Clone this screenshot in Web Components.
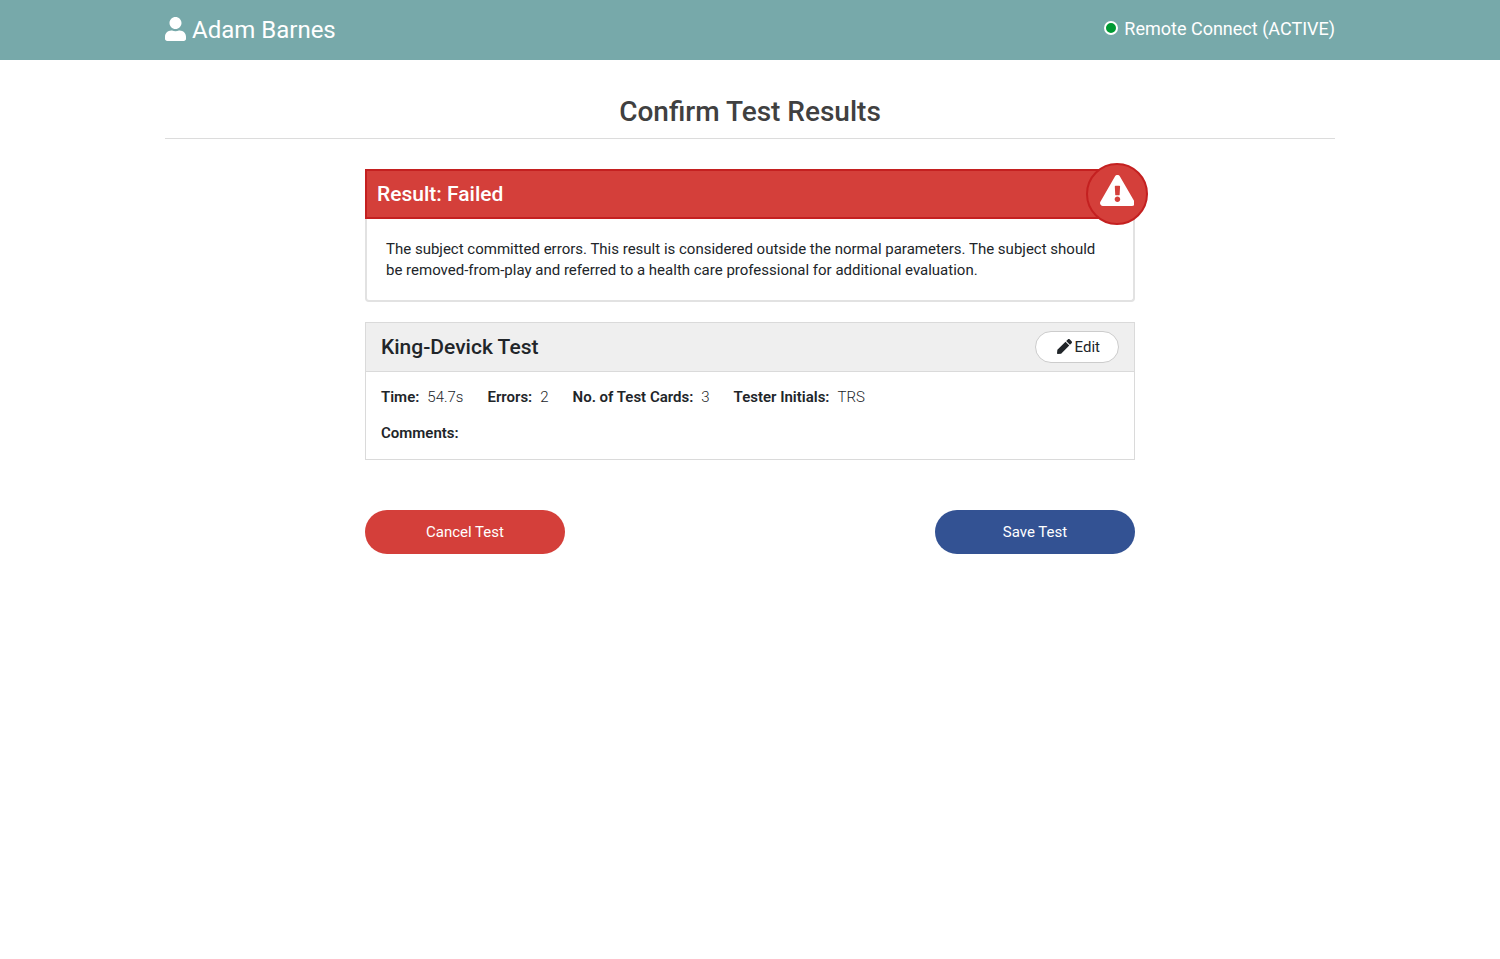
<!DOCTYPE html>
<html lang="en">
<head>
<meta charset="utf-8">
<meta name="viewport" content="width=device-width, initial-scale=1">
<title>Confirm Test Results</title>
<style>
  body {
    margin: 0;
    font-family: Roboto, "Liberation Sans", sans-serif;
    font-size: 15px;
    line-height: 21px;
    color: #212529;
    background: #fff;
  }
</style>
</head>
<body>
<kd-header name="Adam Barnes" status="ACTIVE"></kd-header>

<kd-page heading="Confirm Test Results">
  <kd-result heading="Result: Failed">The subject committed errors. This result is considered outside the normal parameters. The subject should be removed-from-play and referred to a health care professional for additional evaluation.</kd-result>

  <kd-test-card heading="King-Devick Test">
    <kd-field label="Time:">54.7s</kd-field>
    <kd-field label="Errors:">2</kd-field>
    <kd-field label="No. of Test Cards:">3</kd-field>
    <kd-field label="Tester Initials:">TRS</kd-field>
    <kd-field label="Comments:" slot="comments"></kd-field>
  </kd-test-card>

  <kd-button variant="danger" slot="actions">Cancel Test</kd-button>
  <kd-button variant="primary" slot="actions">Save Test</kd-button>
</kd-page>

<script>
const ICONS = {
  user: {
    box: '0 0 448 512',
    d: 'M224 256c70.7 0 128-57.3 128-128S294.7 0 224 0 96 57.3 96 128s57.3 128 128 128zm89.6 32h-16.7c-22.2 10.2-46.9 16-72.9 16s-50.6-5.8-72.9-16h-16.7C60.2 288 0 348.2 0 422.4V464c0 26.5 21.5 48 48 48h352c26.5 0 48-21.5 48-48v-41.6c0-74.2-60.2-134.4-134.4-134.4z'
  },
  warning: {
    box: '0 0 576 512',
    d: 'M569.517 440.013C587.975 472.007 564.806 512 527.94 512H48.054c-36.937 0-59.999-40.055-41.577-71.987L246.423 23.985c18.467-32.009 64.72-31.951 83.154 0l239.94 416.028zM288 354c-25.405 0-46 20.595-46 46s20.595 46 46 46 46-20.595 46-46-20.595-46-46-46zm-43.673-165.346l7.418 136c.347 6.364 5.609 11.346 11.982 11.346h48.546c6.373 0 11.635-4.982 11.982-11.346l7.418-136c.375-6.874-5.098-12.654-11.982-12.654h-63.383c-6.884 0-12.356 5.78-11.981 12.654z'
  },
  pen: {
    box: '0 0 512 512',
    d: 'M290.74 93.24l128.02 128.02-277.99 277.99-114.14 12.6C11.35 513.54-1.56 500.62.14 485.34l12.7-114.22 277.9-277.88zm207.2-19.06l-60.11-60.11c-18.75-18.75-49.16-18.75-67.91 0l-56.55 56.55 128.02 128.02 56.55-56.55c18.75-18.76 18.75-49.16 0-67.91z'
  }
};

class KdElement extends HTMLElement {
  constructor() {
    super();
    this.attachShadow({ mode: 'open' });
  }

  connectedCallback() {
    this.shadowRoot.innerHTML = this.render();
  }

  attr(name) {
    return this.getAttribute(name) || '';
  }
}

// <kd-icon name="user">, sized by its height
class KdIcon extends KdElement {
  render() {
    const icon = ICONS[this.attr('name')];
    return /* html */ `
      <style>
        :host { display: inline-flex; height: 1em; padding-bottom: 2px; }
        svg { display: block; height: 100%; fill: currentColor; }
      </style>
      <svg viewBox="${icon.box}" aria-hidden="true"><path d="${icon.d}"/></svg>
    `;
  }
}

class KdHeader extends KdElement {
  render() {
    return /* html */ `
      <style>
        :host { display: block; background: #77a9aa; color: #fff; }
        header {
          display: flex;
          align-items: center;
          justify-content: space-between;
          box-sizing: border-box;
          max-width: 1200px;
          min-height: 60px;
          margin: 0 auto;
          padding: 0 15px;
        }
        .name {
          display: flex;
          align-items: center;
          gap: 6px;
          font-size: 24px;
          line-height: 32px;
        }
        .status {
          display: flex;
          align-items: center;
          gap: 6px;
          padding-bottom: 3px;
          font-size: 18px;
          line-height: 24px;
        }
        .dot {
          box-sizing: border-box;
          width: 14px;
          height: 14px;
          margin-bottom: 2px;
          border: 2px solid #fff;
          border-radius: 50%;
          background: #093;
        }
      </style>
      <header>
        <div class="name"><kd-icon name="user"></kd-icon><span>${this.attr('name')}</span></div>
        <div class="status"><i class="dot"></i><span>Remote Connect (${this.attr('status')})</span></div>
      </header>
    `;
  }
}

class KdPage extends KdElement {
  render() {
    return /* html */ `
      <style>
        :host {
          display: block;
          box-sizing: border-box;
          max-width: 1200px;
          margin: 0 auto;
          padding: 35px 15px;
        }
        h1 {
          margin: 0 0 30px;
          padding-bottom: 9px;
          border-bottom: 1px solid #dcdcdc;
          font-size: 28px;
          font-weight: 500;
          line-height: 34px;
          text-align: center;
          color: #404040;
        }
        .body {
          display: flex;
          flex-direction: column;
          gap: 20px;
          max-width: 770px;
          margin: 0 auto;
        }
        .actions {
          display: flex;
          justify-content: space-between;
          gap: 20px;
          margin-top: 30px;
        }
      </style>
      <main>
        <h1>${this.attr('heading')}</h1>
        <div class="body">
          <slot></slot>
          <div class="actions"><slot name="actions"></slot></div>
        </div>
      </main>
    `;
  }
}

class KdResult extends KdElement {
  render() {
    return /* html */ `
      <style>
        :host { display: block; position: relative; }
        h2 {
          margin: 0;
          padding: 10px;
          border: 2px solid #c42020;
          background: #d43f3a;
          color: #fff;
          font-size: 21px;
          font-weight: 500;
          line-height: 26px;
        }
        /* overhangs the right end of the title bar */
        .badge {
          position: absolute;
          top: -6px;
          right: -13px;
          display: flex;
          justify-content: center;
          box-sizing: border-box;
          width: 62px;
          height: 62px;
          padding-top: 10px;
          border: 2px solid #c42020;
          border-radius: 50%;
          background: #d43f3a;
          color: #fff;
          font-size: 31px;
        }
        p {
          margin: 0;
          padding: 20px 19px 19px;
          border: 2px solid #e2e2e2;
          border-top: 0;
          border-radius: 0 0 4px 4px;
        }
      </style>
      <h2>${this.attr('heading')}</h2>
      <div class="badge"><kd-icon name="warning"></kd-icon></div>
      <p><slot></slot></p>
    `;
  }
}

class KdTestCard extends KdElement {
  render() {
    return /* html */ `
      <style>
        :host { display: block; border: 1px solid #dadada; }
        header {
          display: flex;
          align-items: center;
          justify-content: space-between;
          padding: 8px 15px;
          border-bottom: 1px solid #dadada;
          background: #efefef;
        }
        h2 {
          margin: 0;
          font-size: 21px;
          font-weight: 500;
          line-height: 32px;
        }
        button {
          display: flex;
          align-items: center;
          gap: 3px;
          height: 32px;
          padding: 0 18px 0 21px;
          border: 1px solid #ccc;
          border-radius: 16px;
          background: #fff;
          color: inherit;
          font: inherit;
          cursor: pointer;
        }
        .body {
          display: flex;
          flex-direction: column;
          gap: 15px;
          padding: 15px;
        }
        .row { display: flex; flex-wrap: wrap; gap: 24px; }
      </style>
      <header>
        <h2>${this.attr('heading')}</h2>
        <button type="button"><kd-icon name="pen"></kd-icon><span>Edit</span></button>
      </header>
      <div class="body">
        <div class="row"><slot></slot></div>
        <slot name="comments"></slot>
      </div>
    `;
  }
}

class KdField extends KdElement {
  render() {
    return /* html */ `
      <style>
        :host { display: flex; gap: 8px; }
        b { font-weight: 600; }
        span { font-weight: 300; }
      </style>
      <b>${this.attr('label')}</b><span><slot></slot></span>
    `;
  }
}

class KdButton extends KdElement {
  render() {
    return /* html */ `
      <style>
        :host { display: block; flex: 0 1 200px; }
        button {
          width: 100%;
          height: 44px;
          border: 0;
          border-radius: 22px;
          background: #335293;
          color: #fff;
          font: inherit;
          cursor: pointer;
        }
        :host([variant="danger"]) button { background: #d43f3a; }
      </style>
      <button type="button"><slot></slot></button>
    `;
  }
}

customElements.define('kd-icon', KdIcon);
customElements.define('kd-header', KdHeader);
customElements.define('kd-page', KdPage);
customElements.define('kd-result', KdResult);
customElements.define('kd-test-card', KdTestCard);
customElements.define('kd-field', KdField);
customElements.define('kd-button', KdButton);
</script>
</body>
</html>
